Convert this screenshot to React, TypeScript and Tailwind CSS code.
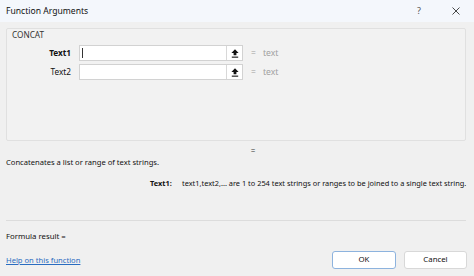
import React from "react";

const font = { fontFamily: '"Noto Sans", "Open Sans", sans-serif' };

const UpArrow: React.FC = () => (
  <svg width="8" height="9" viewBox="0 0 8 9">
    <path d="M4 0.3 L7.6 4 L5.4 4 L5.4 6.3 L2.6 6.3 L2.6 4 L0.4 4 Z" fill="#111" />
    <rect x="0.8" y="7.6" width="6.4" height="1.1" fill="#111" />
  </svg>
);

const ArgRow: React.FC<{ label: string; bold?: boolean; focused?: boolean }> = ({
  label,
  bold,
  focused,
}) => (
  <div className="flex items-center h-[16px]">
    <div
      className={`w-[67px] text-right pr-[8px] text-[8.2px] text-[#111] ${bold ? "font-bold" : ""}`}
    >
      {label}
    </div>
    <div className="flex h-[16px] w-[164px] border border-[#d2d2d2] bg-white">
      <div className="flex-1 flex items-center pl-[2px]">
        {focused && <div className="w-px h-[10px] bg-[#333]" />}
      </div>
      <div className="w-[16px] border-l border-[#d8d8d8] flex items-center justify-center">
        <UpArrow />
      </div>
    </div>
    <div className="ml-[8px] text-[8.5px] text-[#a0a0a0]">=</div>
    <div className="ml-[7px] text-[8.6px] text-[#a0a0a0]">text</div>
  </div>
);

export default function App() {
  return (
    <div className="w-[474px] h-[276px] bg-[#f0f0f0] flex flex-col overflow-hidden" style={font}>
      <div className="h-[22px] shrink-0 bg-[#f4f7fc] flex items-center pl-[6px] pr-[14px]">
        <div className="flex-1 text-[8.6px] text-[#111]">Function Arguments</div>
        <div className="text-[9px] text-[#555] mr-[31px]">?</div>
        <svg width="8" height="8" viewBox="0 0 8 8">
          <path d="M0.5 0.5 L7.5 7.5 M7.5 0.5 L0.5 7.5" stroke="#333" strokeWidth="0.9" />
        </svg>
      </div>

      <div className="ml-[6px] mr-[8px] mt-[6px] h-[113px] shrink-0 border border-[#e0e0e0] rounded-[2px] bg-[#f2f2f2] px-[5px]">
        <div className="text-[8.2px] text-[#333] leading-[11px]">CONCAT</div>
        <div className="mt-[5px] flex flex-col gap-[3px]">
          <ArgRow label="Text1" bold focused />
          <ArgRow label="Text2" />
        </div>
      </div>

      <div className="text-center text-[8px] text-[#333] mt-[4px] leading-[12px] pl-[32px]">=</div>
      <div className="px-[6px] text-[7.6px] text-[#111] leading-[11px]">
        Concatenates a list or range of text strings.
      </div>
      <div className="flex mt-[9px] text-[7.4px] text-[#111] leading-[12px]">
        <span className="ml-[150px] w-[32px] shrink-0 font-bold">Text1:</span>
        <span className="whitespace-nowrap">
          text1,text2,... are 1 to 254 text strings or ranges to be joined to a single text string.
        </span>
      </div>

      <div className="ml-[6px] mr-[8px] mt-[31px] border-t border-[#dcdcdc]" />
      <div className="px-[6px] mt-[9px] text-[7.8px] text-[#111] leading-[12px]">Formula result =</div>
      <div className="flex items-center pl-[6px] pr-[7px] mt-[9px]">
        <a className="flex-1 text-[7.6px] text-[#2a6cc0] underline leading-[12px]">
          Help on this function
        </a>
        <button className="w-[64px] h-[18px] bg-white border border-[#8db3de] rounded-[3px] text-[7.8px] text-[#111]">
          OK
        </button>
        <button className="ml-[8px] w-[63px] h-[18px] bg-white border border-[#d8d8d8] rounded-[3px] text-[7.8px] text-[#111]">
          Cancel
        </button>
      </div>
    </div>
  );
}
